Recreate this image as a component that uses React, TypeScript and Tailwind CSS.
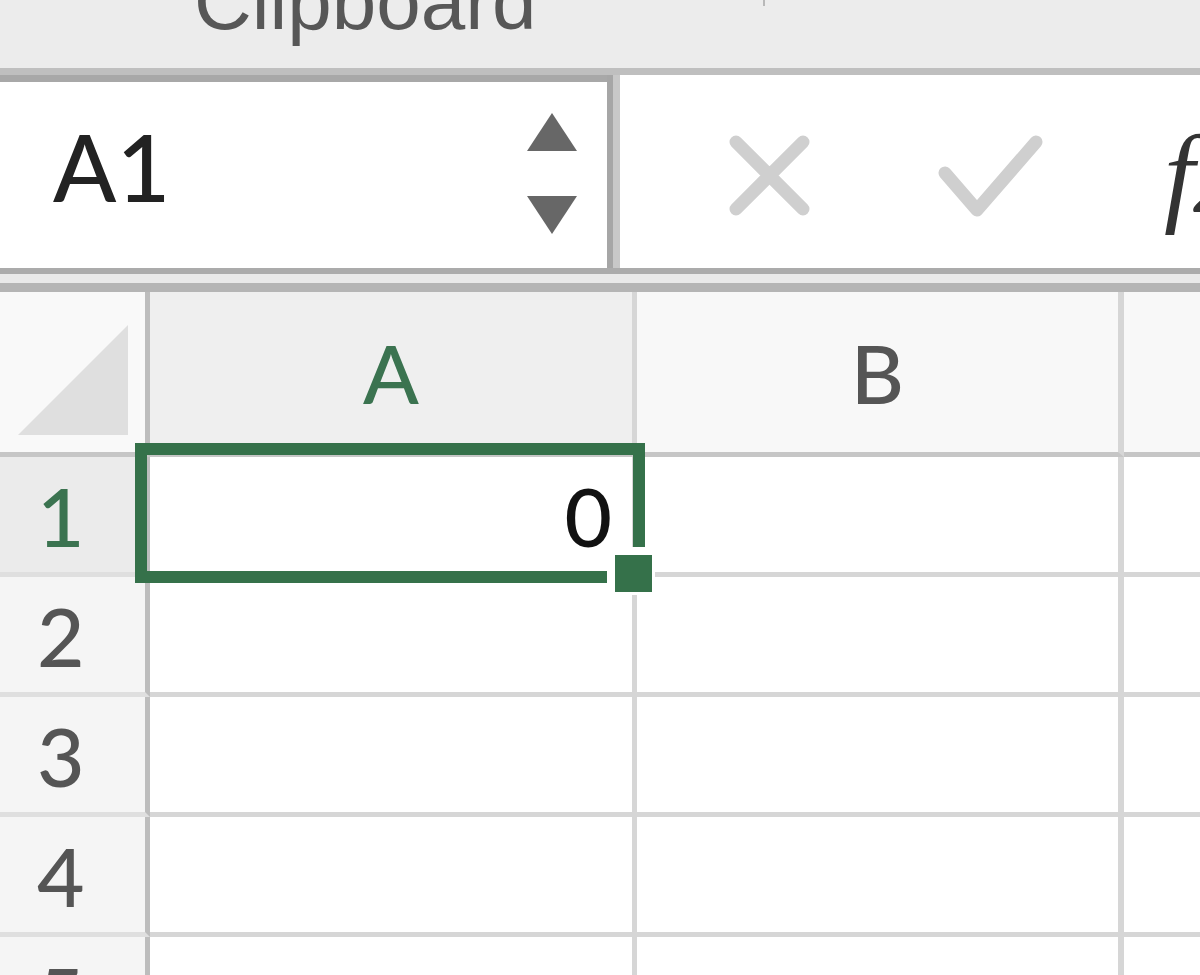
import React from 'react';

const ROWS = [1, 2, 3, 4, 5];

function Triangle({ down }: { down?: boolean }) {
  return (
    <svg width="50" height="38" viewBox="0 0 50 38">
      <path d={down ? 'M0 0 H50 L25 38 Z' : 'M25 0 L50 38 H0 Z'} fill="#676767" />
    </svg>
  );
}

function RowHeader({ n }: { n: number }) {
  const active = n === 1;
  return (
    <div
      className={`w-[150px] shrink-0 h-full flex items-center pl-[37px] border-r-[5px] border-r-[#bdbdbd] border-b-[5px] border-b-[#dfdfdf] text-[82px] font-medium leading-none ${
        active ? 'bg-[#ebebeb] text-[#3b7350]' : 'bg-[#f5f5f5] text-[#555]'
      }`}
    >
      {n}
    </div>
  );
}

export default function App() {
  return (
    <div className="w-[1200px] h-[975px] overflow-hidden bg-white font-['Lato',sans-serif] flex flex-col">
      {/* Ribbon (cut off) */}
      <div className="h-[68px] shrink-0 bg-[#ececec] flex overflow-hidden">
        <span className="ml-[194px] mt-[-38px] text-[80px] leading-none text-[#575757] font-['Liberation_Sans',sans-serif] whitespace-nowrap">
          Clipboard
        </span>
        <span className="ml-[227px] w-[2px] h-[6px] bg-[#b8b8b8]" />
      </div>
      <div className="h-[7px] shrink-0 bg-[#bfbfbf]" />

      {/* Formula bar */}
      <div className="h-[193px] shrink-0 flex">
        <div className="w-[607px] shrink-0 bg-white border-t-[7px] border-[#a8a8a8] flex items-center pl-[53px] pr-[30px]">
          <span className="mb-[18px] text-[93px] font-medium leading-none text-[#222]">A1</span>
          <div className="ml-auto mb-[4px] flex flex-col gap-[45px]">
            <Triangle />
            <Triangle down />
          </div>
        </div>
        <div className="w-[6px] shrink-0 bg-[#a6a6a6]" />
        <div className="w-[7px] shrink-0 bg-[#c8c8c8]" />
        <div className="flex-1 flex items-center bg-white overflow-hidden">
          <svg className="ml-[108px] mt-[8px] shrink-0" width="83" height="83" viewBox="0 0 83 83">
            <path d="M8 8 L75 75 M75 8 L8 75" stroke="#cfcfcf" strokeWidth="13" strokeLinecap="round" />
          </svg>
          <svg className="ml-[126px] mt-[8px] shrink-0" width="107" height="83" viewBox="0 0 107 83">
            <path d="M8 39 L40 76 L99 8" stroke="#cfcfcf" strokeWidth="13" strokeLinecap="round" strokeLinejoin="round" fill="none" />
          </svg>
          <span className="ml-[120px] mt-[6px] text-[110px] leading-none italic text-[#333] font-['Liberation_Serif',serif] whitespace-nowrap">
            fx
          </span>
        </div>
      </div>
      <div className="h-[6px] shrink-0 bg-[#ababab]" />
      <div className="h-[9px] shrink-0 bg-[#e9e9e9]" />
      <div className="h-[9px] shrink-0 bg-[#b5b5b5]" />

      {/* Column headers */}
      <div className="h-[165px] shrink-0 flex">
        <div className="w-[150px] shrink-0 bg-[#f9f9f9] border-r-[5px] border-r-[#bdbdbd] border-b-[5px] border-b-[#c6c6c6] pl-[18px] pt-[33px]">
          <svg width="110" height="110" viewBox="0 0 110 110">
            <path d="M110 0 V110 H0 Z" fill="#dfdfdf" />
          </svg>
        </div>
        <div className="w-[487px] shrink-0 bg-[#efefef] border-r-[5px] border-r-[#d6d6d6] border-b-[5px] border-b-[#c6c6c6] flex items-center justify-center text-[82px] font-medium leading-none text-[#3b7350]">
          A
        </div>
        <div className="w-[487px] shrink-0 bg-[#f8f8f8] border-r-[6px] border-r-[#d6d6d6] border-b-[5px] border-b-[#c6c6c6] flex items-center justify-center text-[82px] font-medium leading-none text-[#555]">
          B
        </div>
        <div className="flex-1 bg-[#f8f8f8] border-b-[5px] border-b-[#c6c6c6]" />
      </div>

      {/* Rows */}
      {ROWS.map((n) => (
        <div key={n} className="h-[120px] shrink-0 flex">
          <RowHeader n={n} />
          <div className="w-[487px] shrink-0 h-full relative bg-white border-r-[5px] border-b-[5px] border-[#d6d6d6] flex items-center justify-end pr-[20px]">
            {n === 1 && (
              <>
                <span className="text-[82px] font-medium leading-none text-[#111]">0</span>
                <div className="absolute left-[-15px] top-[-14px] w-[510px] h-[140px] border-[12px] border-[#35714a] z-10" />
                <div className="absolute left-[457px] top-[90px] w-[48px] h-[48px] bg-white z-20">
                  <div className="ml-[8px] mt-[8px] w-[37px] h-[37px] bg-[#35714a]" />
                </div>
              </>
            )}
          </div>
          <div className="w-[487px] shrink-0 h-full bg-white border-r-[6px] border-b-[5px] border-[#d6d6d6]" />
          <div className="flex-1 h-full bg-white border-b-[5px] border-[#d6d6d6]" />
        </div>
      ))}
    </div>
  );
}
